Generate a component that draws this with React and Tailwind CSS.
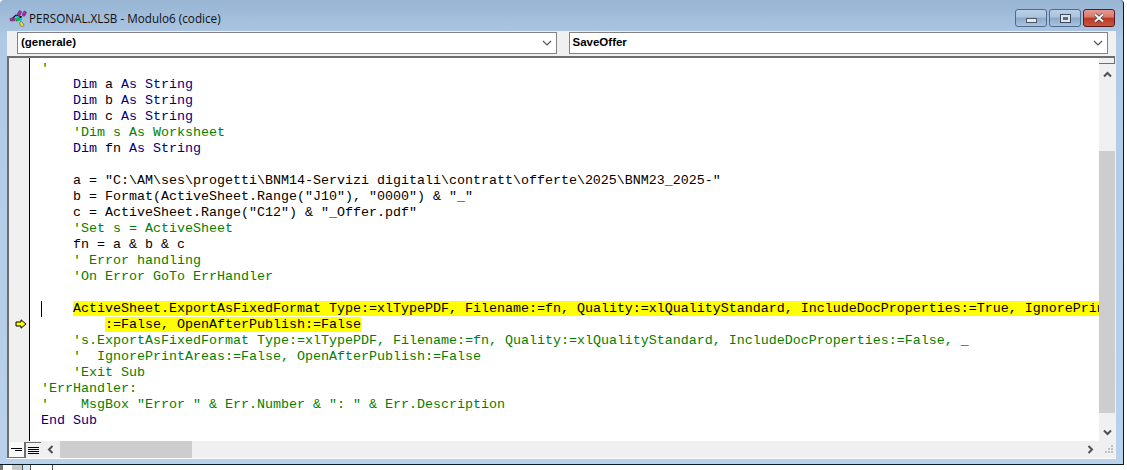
import React from 'react'

const K = ({ children }) => <span className="text-[#000080]">{children}</span>
const C = ({ children }) => <span className="text-[#008000]">{children}</span>

function Line({ children }) {
  return <div className="h-4 leading-4 whitespace-pre">{children || ' '}</div>
}

function VbaIcon() {
  return (
    <svg width="18" height="18" viewBox="0 0 18 18" className="shrink-0 -mt-[2px]">
      <path d="M2 11 L7 6 M7 6 L13 8 M7 12 L12 8" stroke="#111" strokeWidth="1.2" fill="none" />
      <path d="M5 10 L13 10" stroke="#19b5d8" strokeWidth="2" />
      <path d="M7 7 L12 12" stroke="#19b5d8" strokeWidth="1.5" />
      <rect x="9" y="1.5" width="3" height="5" rx="1" transform="rotate(25 10 4)" fill="#b51fb5" stroke="#444" strokeWidth="0.5" />
      <rect x="14" y="2" width="3" height="5" rx="1" transform="rotate(25 15 4)" fill="#b51fb5" stroke="#444" strokeWidth="0.5" />
      <rect x="1" y="9" width="5" height="3" rx="1" fill="#b51fb5" stroke="#444" strokeWidth="0.5" />
      <rect x="7" y="9" width="4" height="3" rx="1" fill="#14b84a" />
      <rect x="11" y="13" width="3" height="5" rx="1" transform="rotate(-30 12 15)" fill="#f3e21c" stroke="#444" strokeWidth="0.5" />
    </svg>
  )
}

function CaptionButton({ kind }) {
  if (kind === 'close') {
    return (
      <div className="w-[32px] h-[18px] rounded-[3px] border border-[#5a1a24] flex items-center justify-center bg-[linear-gradient(#e59a90_0%,#d8776c_45%,#b8391f_50%,#c8563f_100%)]">
        <svg width="14" height="10" viewBox="0 0 14 10">
          <path d="M3 1.5 L11 8.5 M11 1.5 L3 8.5" stroke="#3a3a46" strokeWidth="3.4" />
          <path d="M3 1.5 L11 8.5 M11 1.5 L3 8.5" stroke="#f4f4f4" strokeWidth="2.2" />
        </svg>
      </div>
    )
  }
  return (
    <div className="w-[32px] h-[18px] rounded-[3px] border border-[#4f6a8c] flex items-center justify-center bg-[linear-gradient(#bcd0e6_0%,#a9c2dd_45%,#8aa8c9_50%,#a9c4e0_100%)]">
      {kind === 'min' ? (
        <div className="w-[11px] h-[5px] mt-1 bg-[#e8e8e8] border border-[#4a5568]" />
      ) : (
        <div className="w-[11px] h-[9px] bg-[#dfe5ec] border border-[#3f4a5c] flex items-center justify-center">
          <div className="w-[5px] h-[3px] bg-[#5d6b82]" />
        </div>
      )}
    </div>
  )
}

function Combo({ label }) {
  return (
    <div className="flex-1 h-[22px] bg-white border border-[#828282] flex items-center justify-between pl-[3px] pr-[4px]">
      <span className="font-['Liberation_Sans',sans-serif] font-bold text-[11.5px] text-black">{label}</span>
      <svg width="10" height="6" viewBox="0 0 10 6">
        <path d="M1 1 L5 5 L9 1" stroke="#555" strokeWidth="1.2" fill="none" />
      </svg>
    </div>
  )
}

function Chevron({ dir }) {
  const rotate = { up: 'rotate-0', down: 'rotate-180', left: '-rotate-90', right: 'rotate-90' }[dir]
  return (
    <svg width="9" height="7" viewBox="0 0 9 7" className={rotate}>
      <path d="M1 5.5 L4.5 2 L8 5.5" stroke="#505050" strokeWidth="2" fill="none" />
    </svg>
  )
}

function ViewButton({ full }) {
  return (
    <div
      className={
        'w-4 h-4 flex flex-col gap-[1px] justify-center items-end px-[2px] ' +
        (full ? 'border-l border-t border-[#6d6d6d] bg-[#f0f0f0]' : 'border-r border-b border-[#6d6d6d] bg-[#fafafa]')
      }
    >
      <div className="h-[1px] w-[11px] bg-black" />
      <div className={(full ? 'w-[11px]' : 'w-[7px]') + ' h-[1px] bg-black'} />
      {full && <div className="h-[1px] w-[11px] bg-black" />}
      {full && <div className="h-[1px] w-[11px] bg-black" />}
    </div>
  )
}

export default function App() {
  return (
    <div className="w-[1127px] h-[470px] bg-white overflow-hidden flex flex-col">
      <div className="w-[1124px] h-[465px] shrink-0 flex flex-col rounded-t-[4px] border-r border-b border-[#0a1a24] bg-[linear-gradient(#97b4d3_0px,#b0cae6_40px,#b9d1ea_100%)]">
        {/* title bar */}
        <div className="h-[31px] shrink-0 flex pl-[9px] pr-[8px]">
          <div className="flex items-center gap-[2px] h-[28px] pt-[10px]">
            <VbaIcon />
            <span className="font-['Open_Sans',sans-serif] text-[11.7px] text-[#111]">PERSONAL.XLSB - Modulo6 (codice)</span>
          </div>
          <div className="ml-auto flex gap-[2px] pt-[9px]">
            <CaptionButton kind="min" />
            <CaptionButton kind="max" />
            <CaptionButton kind="close" />
          </div>
        </div>

        {/* client area */}
        <div className="ml-[7px] mr-[7px] h-[428px] bg-[#f0f0f0] flex flex-col border-b border-white">
          <div className="h-[25px] shrink-0 flex gap-[12px] pl-[10px] pr-[8px] pt-[1px]">
            <Combo label="(generale)" />
            <Combo label="SaveOffer" />
          </div>
          <div className="flex-1 min-h-0 flex flex-col mr-[1px] border-l-2 border-t-2 border-[#6d6d6d]">
            <div className="flex-1 min-h-0 flex">
              <div className="w-[20px] shrink-0 bg-[#f0f0f0] flex flex-col items-center pt-[261px]">
                <svg width="12" height="10" viewBox="0 0 12 10" className="ml-[4px]">
                  <path d="M1 3 H6 V0.8 L11 5 L6 9.2 V7 H1 Z" fill="#ffff00" stroke="#000" strokeWidth="1" />
                </svg>
              </div>
              <div className="w-[1px] shrink-0 bg-black" />
              <div className="relative flex-1 min-w-0 bg-white overflow-hidden pl-[11px] pt-[3px] font-['Liberation_Mono',monospace] text-[13.333px] text-black">
                <div className="absolute left-[11px] top-[243px] w-[1px] h-4 bg-black" />
                <Line><C>'</C></Line>
                <Line>    <K>Dim</K> a <K>As String</K></Line>
                <Line>    <K>Dim</K> b <K>As String</K></Line>
                <Line>    <K>Dim</K> c <K>As String</K></Line>
                <Line>    <C>'Dim s As Worksheet</C></Line>
                <Line>    <K>Dim</K> fn <K>As String</K></Line>
                <Line />
                <Line>{'    a = "C:\\AM\\ses\\progetti\\BNM14-Servizi digitali\\contratt\\offerte\\2025\\BNM23_2025-"'}</Line>
                <Line>{'    b = Format(ActiveSheet.Range("J10"), "0000") & "_"'}</Line>
                <Line>{'    c = ActiveSheet.Range("C12") & "_Offer.pdf"'}</Line>
                <Line>    <C>'Set s = ActiveSheet</C></Line>
                <Line>    fn = a &amp; b &amp; c</Line>
                <Line>    <C>' Error handling</C></Line>
                <Line>    <C>'On Error GoTo ErrHandler</C></Line>
                <Line />
                <Line>    <span className="bg-[#ffff00]">ActiveSheet.ExportAsFixedFormat Type:=xlTypePDF, Filename:=fn, Quality:=xlQualityStandard, IncludeDocProperties:=True, IgnorePrintAreas</span></Line>
                <Line>        <span className="bg-[#ffff00]">:=False, OpenAfterPublish:=False</span></Line>
                <Line>    <C>'s.ExportAsFixedFormat Type:=xlTypePDF, Filename:=fn, Quality:=xlQualityStandard, IncludeDocProperties:=False, </C>_</Line>
                <Line>    <C>'  IgnorePrintAreas:=False, OpenAfterPublish:=False</C></Line>
                <Line>    <C>'Exit Sub</C></Line>
                <Line><C>'ErrHandler:</C></Line>
                <Line><C>'    MsgBox "Error " &amp; Err.Number &amp; ": " &amp; Err.Description</C></Line>
                <Line><K>End Sub</K></Line>
              </div>
              {/* vertical scrollbar */}
              <div className="w-[16px] shrink-0 flex flex-col items-center bg-[#f0f0f0]">
                <div className="w-full h-[6px] bg-[#f0f0f0] border-r border-b border-[#6d6d6d]" />
                <div className="h-[17px] flex items-center pt-[3px]"><Chevron dir="up" /></div>
                <div className="h-[70px]" />
                <div className="w-full h-[262px] bg-[#cdcdcd]" />
                <div className="flex-1 flex items-center justify-center pt-[10px]"><Chevron dir="down" /></div>
              </div>
            </div>
            {/* horizontal scrollbar */}
            <div className="h-[17px] shrink-0 flex items-center bg-[#f0f0f0]">
              <ViewButton />
              <ViewButton full />
              <div className="w-[19px] flex justify-center"><Chevron dir="left" /></div>
              <div className="w-[132px] h-full bg-[#cdcdcd]" />
              <div className="flex-1 flex justify-end pr-[6px]"><Chevron dir="right" /></div>
              <div className="w-[14px] flex justify-center">
                <svg width="9" height="9" viewBox="0 0 9 9">
                  <path d="M7 0h2v2H7zM4 3h2v2H4zM7 3h2v2H7zM1 6h2v2H1zM4 6h2v2H4zM7 6h2v2H7z" fill="#c0c0c0" />
                </svg>
              </div>
            </div>
          </div>
        </div>
      </div>
      {/* bits of what lies behind the window */}
      <div className="flex-1 flex">
        <div className="w-[3px] bg-[#777]" />
        <div className="w-[9px]" />
        <div className="w-[10px] bg-[#c8c8c8]" />
        <div className="w-[1px] bg-[#555]" />
        <div className="w-[7px] bg-[#dde6f0]" />
        <div className="w-[1px] bg-[#555]" />
        <div className="w-[21px]" />
        <div className="w-[1px] bg-[#555]" />
      </div>
    </div>
  )
}
